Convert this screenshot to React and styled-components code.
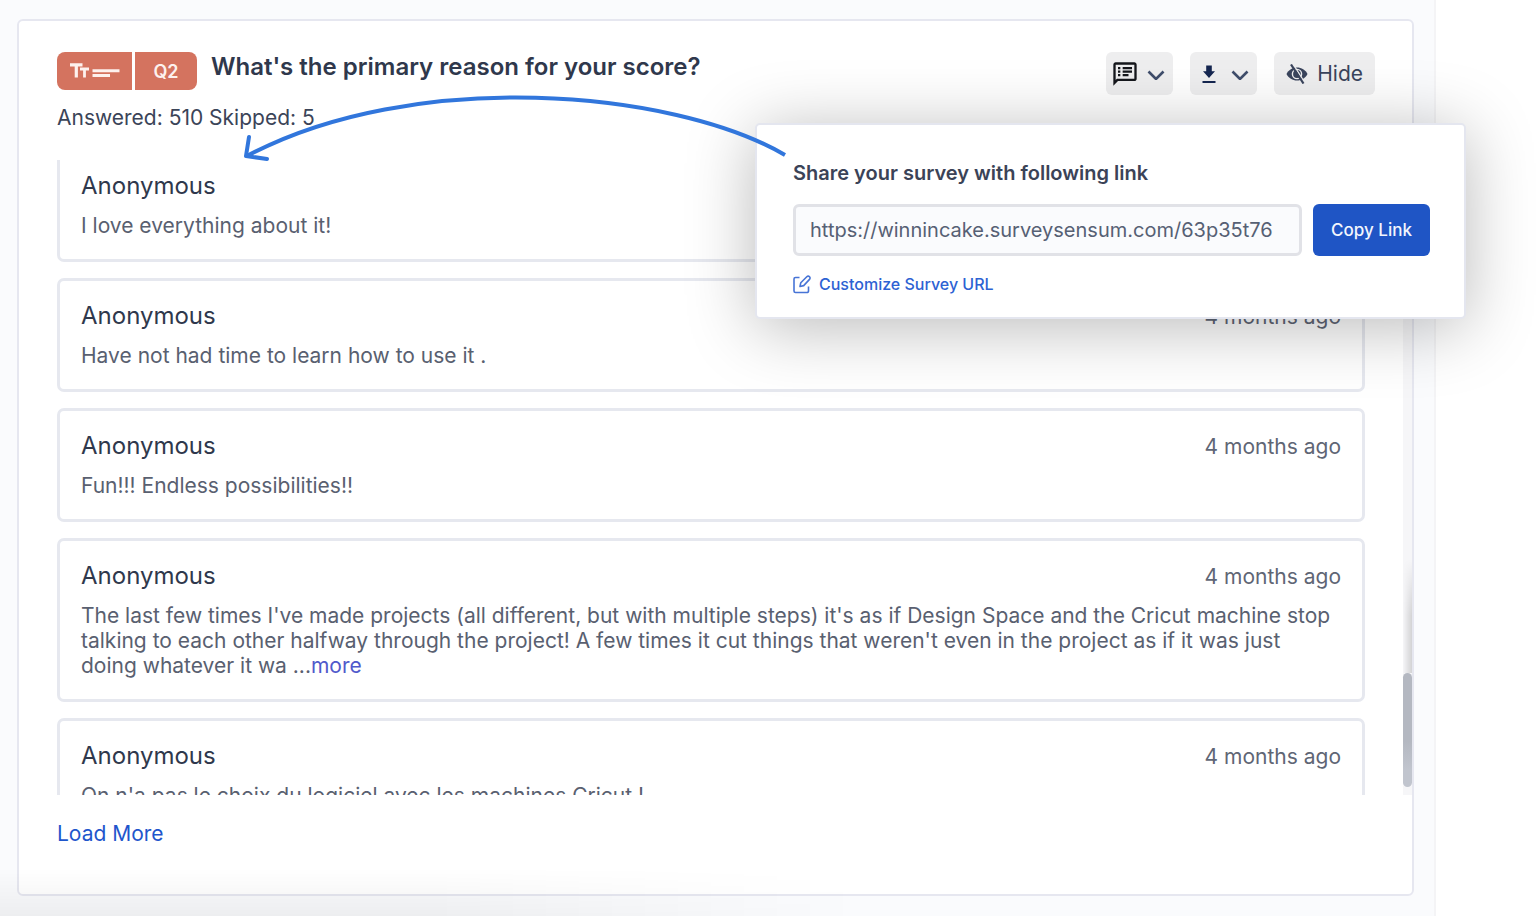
import React, { useLayoutEffect, useRef, useState } from 'react'
import styled, { createGlobalStyle } from 'styled-components'
import { MdOutlineSpeakerNotes } from 'react-icons/md'

const GlobalStyle = createGlobalStyle`
  * {
    box-sizing: border-box;
  }
  body {
    margin: 0;
    background: #ffffff;
    color: #2f384c;
    font-family: Inter, 'Liberation Sans', sans-serif;
    font-size: 21px;
  }
  button, input {
    font-family: inherit;
  }
  h1, h2, h3, p, ul {
    margin: 0;
    padding: 0;
    font-weight: inherit;
  }
`

const Page = styled.main`
  position: relative;
  min-height: 100vh;
  margin-right: 100px;
  padding: 19px 20px 20px 17px;
  border-right: 2px solid #f4f4f6;
  background: #fafbfd;
  &::after {
    content: '';
    position: absolute;
    left: 0;
    right: 40%;
    bottom: 0;
    height: 48px;
    background: linear-gradient(to right, rgba(0, 0, 0, 0.05) 50%, transparent);
    mask-image: linear-gradient(to top, #000000, transparent);
    pointer-events: none;
  }
`

const Card = styled.section`
  position: relative;
  padding: 31px 0 46px 38px;
  border: 2px solid #e6e7f0;
  border-radius: 6px;
  background: #ffffff;
`

const Header = styled.header`
  display: flex;
  justify-content: space-between;
  align-items: flex-start;
  padding-right: 37px;
`

const Heading = styled.div`
  display: flex;
  gap: 14px;
`

const Badge = styled.div`
  display: flex;
  gap: 3px;
  height: 38px;
  overflow: hidden;
  border-radius: 8px;
`

const BadgePart = styled.span`
  display: flex;
  align-items: center;
  justify-content: center;
  width: ${props => props.width};
  background: #d4735f;
  color: #fdf1ee;
  font-size: 18px;
  font-weight: 600;
`

const Question = styled.h1`
  font-size: 24px;
  font-weight: 600;
  line-height: 30px;
`

const Toolbar = styled.div`
  display: flex;
  gap: 17px;
`

const ToolButton = styled.button`
  display: flex;
  align-items: center;
  gap: ${props => props.gap};
  height: 43px;
  padding: ${props => props.padding};
  border: 0;
  border-radius: 6px;
  background: #eeeeef;
  color: #3a445c;
  font-size: 21px;
  cursor: pointer;
`

const Stats = styled.p`
  padding-top: 9px;
  color: #3b4458;
  line-height: 28px;
`

const ListArea = styled.div`
  display: flex;
  justify-content: space-between;
  height: 635px;
  margin-top: 28px;
`

const AnswerList = styled.ul`
  flex: 1;
  display: flex;
  flex-direction: column;
  gap: 16px;
  margin-right: 38px;
  overflow-y: scroll;
  scrollbar-width: none;
  list-style: none;
`

const Answer = styled.li`
  flex: none;
  padding: 21px;
  border: 3px solid #e6e8ef;
  border-radius: 7px;
`

const AnswerHead = styled.div`
  display: flex;
  justify-content: space-between;
  align-items: flex-end;
  height: 28px;
  margin-bottom: 13px;
`

const Author = styled.h2`
  font-size: 24px;
  line-height: 28px;
`

const Age = styled.span`
  color: #5f6675;
  line-height: 26px;
`

const AnswerText = styled.p`
  color: #596070;
  line-height: 25px;
`

const More = styled.a`
  color: #5059cb;
  text-decoration: none;
`

const Track = styled.div`
  display: flex;
  flex-direction: column;
  justify-content: flex-end;
  width: 9px;
  padding-bottom: 8px;
  background: #f6f6f8;
`

const Shade = styled.div`
  height: 114px;
  background: linear-gradient(to right, transparent, rgba(0, 0, 0, 0.14));
  mask-image: linear-gradient(to bottom, transparent, #000000 50%);
`

const Thumb = styled.div`
  height: 114px;
  border-radius: 5px;
  background: linear-gradient(#b4b8c1 60%, #c1c5ce 85%);
`

const LoadMore = styled.button`
  display: block;
  margin-top: 25px;
  padding: 0;
  border: 0;
  background: none;
  color: #1f56cc;
  font-size: 21px;
  line-height: 28px;
  cursor: pointer;
`

const SharePopup = styled.aside`
  position: absolute;
  top: 102px;
  right: -54px;
  z-index: 2;
  width: 711px;
  padding: 34px 34px 18px 36px;
  border: 2px solid #e4e6ef;
  border-radius: 5px;
  background: #ffffff;
  box-shadow: 0 8px 68px rgba(0, 0, 0, 0.28);
`

const ShareLabel = styled.label`
  display: block;
  color: #3b4357;
  font-size: 20px;
  font-weight: 600;
  line-height: 28px;
`

const ShareRow = styled.div`
  display: flex;
  gap: 11px;
  margin: 17px 0 14px;
`

const LinkInput = styled.input`
  flex: 1;
  min-width: 0;
  height: 52px;
  padding: 0 14px;
  border: 3px solid #e1e2e7;
  border-radius: 6px;
  background: #fafbfd;
  color: #566074;
  font-size: 20px;
`

const CopyButton = styled.button`
  width: 117px;
  padding: 0;
  border: 0;
  border-radius: 6px;
  background: #1f55c5;
  color: #f3f6fd;
  font-size: 17px;
  font-weight: 500;
  cursor: pointer;
`

const CustomizeLink = styled.a`
  display: inline-flex;
  align-items: center;
  gap: 8px;
  color: #2d62d3;
  font-size: 16px;
  font-weight: 500;
  line-height: 28px;
  text-decoration: none;
`

const Arrow = styled.svg`
  position: absolute;
  top: -32px;
  left: -515px;
  pointer-events: none;
`

const answers = [
  { text: 'I love everything about it!' },
  { text: 'Have not had time to learn how to use it .' },
  { text: 'Fun!!! Endless possibilities!!' },
  {
    text: "The last few times I've made projects (all different, but with multiple steps) it's as if Design Space and the Cricut machine stop talking to each other halfway through the project! A few times it cut things that weren't even in the project as if it was just doing whatever it wa ...",
    more: true
  },
  { text: "On n'a pas le choix du logiciel avec les machines Cricut !" }
]

const Chevron = () => (
  <svg width="18" height="12" viewBox="0 0 18 12" fill="none" stroke="#3f4d6b" strokeWidth="2.6">
    <path d="M1.500 3.500 9 11 16.500 3.500" />
  </svg>
)

const TextTypeIcon = () => (
  <svg width="50" height="18" viewBox="0 0 50 18" fill="none" stroke="#fdf1ee">
    <path d="M0 2.800h12.500M6.300 2v13.500" strokeWidth="3.200" />
    <path d="M10 7h9M14.500 6.500v9" strokeWidth="2.800" />
    <path d="M22.500 8.700h27M22.500 13.500h17.500" strokeWidth="3" />
  </svg>
)

const DownloadIcon = () => (
  <svg width="14" height="19" viewBox="0 0 14 19" fill="#152650">
    <path d="M4.200 1.500h5.600v5.800H13L7 14 1 7.300h3.200zM0.500 17h13v2H0.500z" />
  </svg>
)

const HideIcon = () => (
  <svg width="22" height="20" viewBox="0 0 22 20">
    <path d="M0.500 10C2.500 6 6.500 3.500 11 3.500S19.500 6 21.500 10c-2 4-6 6.500-10.500 6.500S2.500 14 0.500 10z" fill="#3a445c" />
    <circle cx="11" cy="10" r="4.600" fill="none" stroke="#eeeeef" strokeWidth="1.400" />
    <path d="M7 0 19 19" stroke="#eeeeef" strokeWidth="1.400" />
    <path d="M5 0.500 17.500 19.500" stroke="#3a445c" strokeWidth="2.200" />
  </svg>
)

const EditIcon = () => (
  <svg width="18" height="19" viewBox="0 0 18 19" fill="none" stroke="#4774d6" strokeWidth="1.600" strokeLinejoin="round">
    <path d="M6.500 2.500H2.500A1.500 1.500 0 0 0 1 4v12A1.500 1.500 0 0 0 2.500 17.500h11.500A1.500 1.500 0 0 0 15.500 16v-4.500" />
    <path d="M7 11.500l.8-3.800 6-6a1.900 1.900 0 0 1 2.700 0l0 0a1.900 1.900 0 0 1 0 2.700L10.700 10.600z" />
  </svg>
)

const App = () => {
  const listRef = useRef(null)
  const [link, setLink] = useState('https://winnincake.surveysensum.com/63p35t76')

  useLayoutEffect(() => {
    listRef.current.scrollTop = 12
  }, [])

  return (
    <>
      <GlobalStyle />
      <Page>
        <Card>
          <Header>
            <Heading>
              <Badge>
                <BadgePart width="75px"><TextTypeIcon /></BadgePart>
                <BadgePart width="62px">Q2</BadgePart>
              </Badge>
              <Question>What's the primary reason for your score?</Question>
            </Heading>
            <Toolbar>
              <ToolButton aria-label="Comments" gap="8px" padding="0 8px 0 5px">
                <MdOutlineSpeakerNotes size={28} color="#15171c" />
                <Chevron />
              </ToolButton>
              <ToolButton aria-label="Download" gap="15px" padding="0 8px 0 12px">
                <DownloadIcon />
                <Chevron />
              </ToolButton>
              <ToolButton gap="9px" padding="0 12px">
                <HideIcon />
                Hide
              </ToolButton>
            </Toolbar>
          </Header>
          <Stats>Answered: 510 Skipped: 5</Stats>
          <ListArea>
            <AnswerList ref={listRef}>
              {answers.map((answer, index) => (
                <Answer key={'answer' + index}>
                  <AnswerHead>
                    <Author>Anonymous</Author>
                    <Age>4 months ago</Age>
                  </AnswerHead>
                  <AnswerText>
                    {answer.text}
                    {answer.more && <More href="#more">more</More>}
                  </AnswerText>
                </Answer>
              ))}
            </AnswerList>
            <Track>
              <Shade />
              <Thumb />
            </Track>
          </ListArea>
          <LoadMore>Load More</LoadMore>
          <SharePopup>
            <ShareLabel htmlFor="survey-link">Share your survey with following link</ShareLabel>
            <ShareRow>
              <LinkInput id="survey-link" value={link} onChange={e => setLink(e.target.value)} />
              <CopyButton>Copy Link</CopyButton>
            </ShareRow>
            <CustomizeLink href="#customize">
              <EditIcon />
              Customize Survey URL
            </CustomizeLink>
            <Arrow width="550" height="70" viewBox="0 0 550 70" fill="none" stroke="#3176dc" strokeWidth="4">
              <path d="M543 62C430 -4 170 -25 5 63" />
              <path d="M7 44 4 63 25 66" strokeLinecap="round" strokeLinejoin="round" />
            </Arrow>
          </SharePopup>
        </Card>
      </Page>
    </>
  )
}

export default App
